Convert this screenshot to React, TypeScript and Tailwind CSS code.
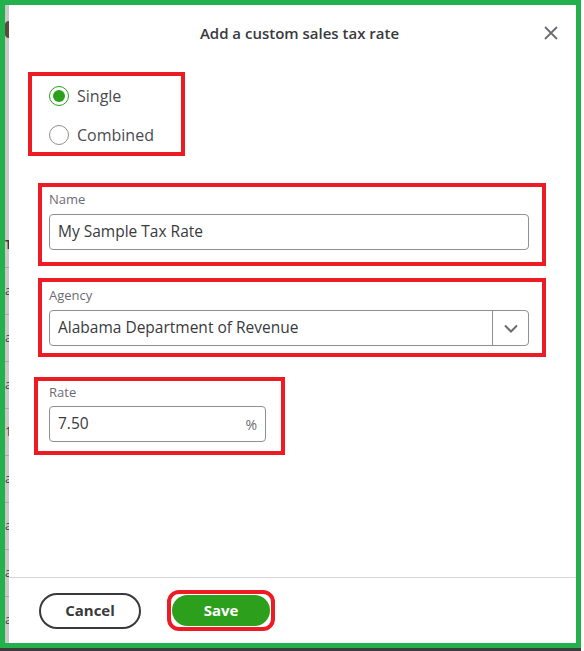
import React from "react";

const font = { fontFamily: '"Open Sans", "Liberation Sans", sans-serif' };

function BackdropStrip() {
  const rows = ["a", "a", "a", "1", "a", "a", "a", "a"];
  return (
    <div className="w-[4px] bg-[#c9c9c9] flex flex-col overflow-hidden text-[12px] leading-none text-[#393a3d]">
      <div className="h-[16px]" />
      <div className="h-[18px] w-[4px] rounded-l-full bg-[#5a4a40]" />
      <div className="h-[190px]" />
      <div className="h-[44px] flex items-center font-bold">T</div>
      {rows.map((r, i) => (
        <div key={i} className="h-[47px] shrink-0 border-t border-[#a9a9a9] flex items-center">
          {r}
        </div>
      ))}
    </div>
  );
}

function Radio({ checked, label }: { checked?: boolean; label: string }) {
  return (
    <div className="flex items-center gap-[8px] h-[20px]">
      <div
        className={
          checked
            ? "w-[20px] h-[20px] rounded-full border border-[#2ca01c] flex items-center justify-center"
            : "w-[20px] h-[20px] rounded-full border border-[#8d9096]"
        }
      >
        {checked && <div className="w-[12px] h-[12px] rounded-full bg-[#2ca01c]" />}
      </div>
      <span className="text-[16px] text-[#4a4b50]">{label}</span>
    </div>
  );
}

export default function App() {
  return (
    <div className="w-[584px] h-[651px] bg-white flex flex-col overflow-hidden" style={font}>
      <div className="w-[581px] h-[648px] border-[5px] border-[#22b14c] flex">
        <BackdropStrip />

        {/* Dialog */}
        <div className="flex-1 flex flex-col bg-white">
          {/* Header */}
          <div className="h-[56px] flex items-center pl-[46px] pr-[18px]">
            <h1 className="flex-1 text-center text-[15px] font-semibold text-[#393a3d]">
              Add a custom sales tax rate
            </h1>
            <svg width="14" height="14" viewBox="0 0 14 14" className="text-[#6b6c72]">
              <path d="M1 1L13 13M13 1L1 13" stroke="currentColor" strokeWidth="1.8" fill="none" />
            </svg>
          </div>

          {/* Body */}
          <div className="flex-1 flex flex-col">
            {/* Type */}
            <div className="mt-[11px] ml-[19px] w-[157px] h-[84px] border-[4px] border-[#ed1c24] pl-[17px] pt-[10px] flex flex-col gap-[19px]">
              <Radio checked label="Single" />
              <Radio label="Combined" />
            </div>

            {/* Name */}
            <div className="mt-[27px] ml-[29px] w-[508px] border-[4px] border-[#ed1c24] pl-[7px] pr-[13px] pt-[4px] pb-[12px]">
              <div className="text-[13px] leading-[16px] text-[#6b6c72]">Name</div>
              <div className="mt-[7px] h-[36px] rounded-[4px] border border-[#8d9096] flex items-center px-[8px] text-[15.5px] text-[#393a3d]">
                My Sample Tax Rate
              </div>
            </div>

            {/* Agency */}
            <div className="mt-[12px] ml-[29px] w-[508px] border-[4px] border-[#ed1c24] pl-[7px] pr-[13px] pt-[5px] pb-[7px]">
              <div className="text-[13px] leading-[16px] text-[#6b6c72]">Agency</div>
              <div className="mt-[7px] h-[36px] rounded-[4px] border border-[#8d9096] flex items-center text-[15.5px] text-[#393a3d]">
                <span className="flex-1 px-[8px]">Alabama Department of Revenue</span>
                <div className="w-[36px] h-full border-l border-[#8d9096] flex items-center justify-center">
                  <svg width="14" height="9" viewBox="0 0 14 9" className="text-[#6b6c72]">
                    <path d="M1 1.5L7 7.5L13 1.5" stroke="currentColor" strokeWidth="2" fill="none" />
                  </svg>
                </div>
              </div>
            </div>

            {/* Rate */}
            <div className="mt-[20px] ml-[25px] w-[251px] border-[4px] border-[#ed1c24] pl-[11px] pr-[15px] pt-[3px] pb-[9px]">
              <div className="text-[13px] leading-[16px] text-[#6b6c72]">Rate</div>
              <div className="mt-[6px] h-[36px] rounded-[4px] border border-[#8d9096] flex items-center justify-between px-[8px] text-[15.5px] text-[#393a3d]">
                <span>7.50</span>
                <span className="text-[14px] text-[#6b6c72]">%</span>
              </div>
            </div>
          </div>

          {/* Footer */}
          <div className="h-[66px] border-t border-[#d4d7dc] flex items-center pl-[30px] gap-[26px]">
            <button className="w-[102px] h-[36px] rounded-full border-2 border-[#393a3d] text-[15px] font-bold text-[#393a3d]">
              Cancel
            </button>
            <div className="w-[108px] h-[41px] rounded-[12px] border-[4px] border-[#ed1c24] p-[1px]">
              <button className="w-full h-full rounded-full bg-[#2ca01c] text-[15px] font-bold text-white">
                Save
              </button>
            </div>
          </div>
        </div>
      </div>
      <div className="w-[581px] h-[3px] bg-[#3c3c3c]" />
    </div>
  );
}
